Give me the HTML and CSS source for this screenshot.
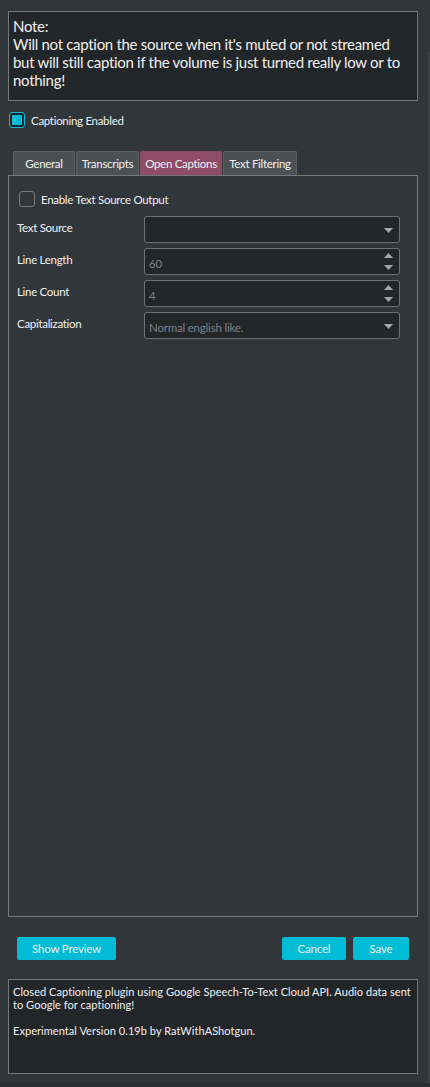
FILE: index.html
```html
<!DOCTYPE html>
<html>
<head>
<meta charset="utf-8">
<link rel="stylesheet" href="styles.css">
</head>
<body>
<div class="page">
  <div class="main">
    <div class="note">Note:<br>Will not caption the source when it's muted or not streamed<br>but will still caption if the volume is just turned really low or to<br>nothing!</div>

    <label class="check-row top-check">
      <span class="box checked"><span class="fill"></span></span>
      <span class="check-text">Captioning Enabled</span>
    </label>

    <div class="tabs">
      <div class="tab t-general">General</div>
      <div class="tab t-trans">Transcripts</div>
      <div class="tab t-open active">Open Captions</div>
      <div class="tab t-filter">Text Filtering</div>
    </div>

    <div class="panel">
      <label class="check-row inner-check">
        <span class="box"></span>
        <span class="check-text">Enable Text Source Output</span>
      </label>
      <div class="form">
        <div class="label">Text Source</div>
        <div class="field">
          <span class="value"></span>
          <svg class="arrow" width="9" height="5" viewBox="0 0 9 5"><path d="M0 0H9L4.5 5Z" fill="#a4a7aa"/></svg>
        </div>
        <div class="label">Line Length</div>
        <div class="field spin">
          <span class="value">60</span>
          <span class="spinners">
            <svg width="9" height="5" viewBox="0 0 9 5"><path d="M0 5H9L4.5 0Z" fill="#a4a7aa"/></svg>
            <svg width="9" height="5" viewBox="0 0 9 5"><path d="M0 0H9L4.5 5Z" fill="#a4a7aa"/></svg>
          </span>
        </div>
        <div class="label">Line Count</div>
        <div class="field spin">
          <span class="value">4</span>
          <span class="spinners">
            <svg width="9" height="5" viewBox="0 0 9 5"><path d="M0 5H9L4.5 0Z" fill="#a4a7aa"/></svg>
            <svg width="9" height="5" viewBox="0 0 9 5"><path d="M0 0H9L4.5 5Z" fill="#a4a7aa"/></svg>
          </span>
        </div>
        <div class="label">Capitalization</div>
        <div class="field">
          <span class="value">Normal english like.</span>
          <svg class="arrow" width="9" height="5" viewBox="0 0 9 5"><path d="M0 0H9L4.5 5Z" fill="#a4a7aa"/></svg>
        </div>
      </div>
    </div>

    <div class="buttons">
      <button class="btn preview">Show Preview</button>
      <span class="spacer"></span>
      <button class="btn cancel">Cancel</button>
      <button class="btn save">Save</button>
    </div>

    <div class="info">Closed Captioning plugin using Google Speech-To-Text Cloud API. Audio data sent<br>to Google for captioning!<br><br>Experimental Version 0.19b by RatWithAShotgun.</div>
  </div>
  <div class="gutter"></div>
</div>
<div class="footer"></div>
</body>
</html>
```
FILE: styles.css
```css
html, body {
  margin: 0;
  padding: 0;
  background: #31363b;
}
body {
  width: 430px;
  height: 1087px;
  overflow: hidden;
  font-family: "Lato", "Open Sans", sans-serif;
  color: #eff0f1;
}
.page {
  display: flex;
  height: 1083px;
}
.main {
  width: 410px;
  padding: 11px 10px 0 8px;
  display: flex;
  flex-direction: column;
}
.gutter {
  width: 2px;
  margin-top: 52px;
  background: #3b4045;
}
.footer {
  height: 4px;
  background: #2a2e32;
}
.note {
  box-sizing: border-box;
  height: 90px;
  border: 1px solid #76797c;
  background: #232629;
  padding: 5px 4px 0 4px;
  font-size: 15px;
  letter-spacing: -0.3px;
  line-height: 18px;
  white-space: nowrap;
  color: #eff0f1;
}
.check-row {
  display: flex;
  align-items: center;
  gap: 6px;
  font-size: 11.5px;
  letter-spacing: -0.3px;
}
.top-check {
  margin-top: 11px;
  margin-left: 1px;
  height: 16px;
}
.box {
  box-sizing: border-box;
  width: 16px;
  height: 16px;
  border: 1px solid #76797c;
  border-radius: 3px;
  background: #31363b;
  display: flex;
  align-items: center;
  justify-content: center;
}
.box.checked {
  border-color: #00bcd4;
  background: #232629;
}
.box .fill {
  width: 10px;
  height: 10px;
  background: #00bcd4;
  border-radius: 1px;
}
.tabs {
  margin-top: 23px;
  margin-left: 5px;
  display: flex;
  gap: 1px;
  height: 24px;
}
.tab {
  box-sizing: border-box;
  height: 24px;
  border: 1px solid #5c6166;
  border-bottom: none;
  border-radius: 2px 2px 0 0;
  background: #4b5055;
  font-size: 11.5px;
  letter-spacing: -0.3px;
  line-height: 24px;
  text-align: center;
  color: #eff0f1;
}
.t-general { width: 62px; }
.t-trans { width: 63px; }
.t-open { width: 82px; }
.t-filter { width: 74px; }
.tab.active {
  background: #8f4c67;
  border-color: #8f4c67;
}
.panel {
  box-sizing: border-box;
  height: 742px;
  border: 1px solid #76797c;
  padding: 15px 17px 0 8px;
}
.inner-check {
  margin-left: 2px;
  height: 16px;
}
.inner-check .box {
  background: #31363b;
}
.form {
  margin-top: 9px;
  display: grid;
  grid-template-columns: 127px 256px;
  row-gap: 5px;
  align-items: start;
}
.label {
  font-size: 11.5px;
  letter-spacing: -0.3px;
  line-height: 14px;
  padding-top: 5px;
}
.field {
  box-sizing: border-box;
  height: 27px;
  border: 1px solid #6c7074;
  border-radius: 3px;
  background: #232629;
  display: flex;
  align-items: center;
  padding: 0 6px 0 4px;
}
.value {
  flex: 1;
  font-size: 11.5px;
  letter-spacing: -0.2px;
  color: #7d8186;
  padding-top: 3px;
}
.arrow {
  margin-top: 2px;
}
.spinners {
  display: flex;
  flex-direction: column;
  gap: 7px;
}
.spinners svg {
  display: block;
}
.buttons {
  margin-top: 20px;
  display: flex;
  padding: 0 9px 0 9px;
  gap: 7px;
}
.spacer { flex: 1; }
.btn {
  height: 23px;
  border: none;
  border-radius: 2px;
  background: #00bcd4;
  color: #eff0f1;
  font-family: "Lato", "Open Sans", sans-serif;
  font-size: 11.5px;
  letter-spacing: -0.2px;
  padding: 0;
}
.preview { width: 99px; }
.cancel { width: 64px; }
.save { width: 56px; }
.info {
  box-sizing: border-box;
  margin-top: 19px;
  height: 95px;
  border: 1px solid #76797c;
  background: #232629;
  padding: 5px 4px 0 4px;
  font-size: 11px;
  letter-spacing: 0.05px;
  line-height: 13px;
  white-space: nowrap;
}
```
